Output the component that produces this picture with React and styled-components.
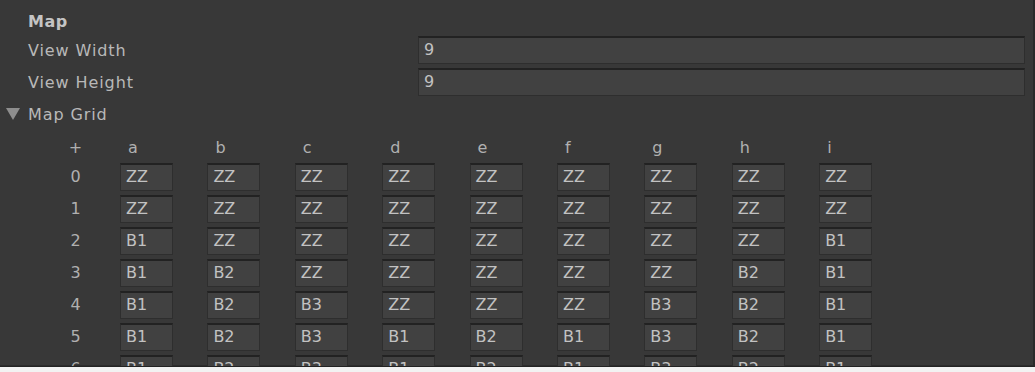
import React from "react";
import styled, { createGlobalStyle } from "styled-components";

const Global = createGlobalStyle`
  html, body { margin: 0; padding: 0; background: #f2f2f2; }
  #root { width: 1035px; }
`;

const Panel = styled.div`
  box-sizing: border-box;
  width: 1035px;
  height: 367px;
  background: #383838;
  border-right: 2px solid #2a2a2a;
  border-bottom: 1px solid #232323;
  overflow: hidden;
  font-family: "DejaVu Sans", "Liberation Sans", sans-serif;
  font-size: 16px;
  color: #b8b8b8;
  padding: 11px 8px 0 0;
  box-shadow: inset 0 -1px 0 #2c2c2c;
`;

const SectionTitle = styled.div`
  height: 22px;
  line-height: 22px;
  padding-left: 28px;
  font-weight: bold;
  letter-spacing: 0.5px;
  color: #c4c4c4;
`;

const PropertyRow = styled.div`
  display: flex;
  align-items: center;
  height: 28px;
  margin-top: ${(p) => p.$gap}px;
  padding-left: 28px;
`;

const Label = styled.div`
  width: 390px;
  flex: none;
  letter-spacing: 0.9px;
`;

const ValueField = styled.div`
  box-sizing: border-box;
  flex: 1;
  height: 28px;
  background: #414141;
  border: 1px solid #2e2e2e;
  border-top: 2px solid #222222;
  padding-left: 5px;
  line-height: 24px;
  color: #c2c2c2;
`;

const Foldout = styled.div`
  display: flex;
  align-items: center;
  height: 26px;
  margin-top: 5px;
  padding-left: 6px;
  gap: 8px;
  letter-spacing: 0.9px;
`;

const Arrow = styled.span`
  width: 0;
  height: 0;
  border-left: 7px solid transparent;
  border-right: 7px solid transparent;
  border-top: 12px solid #8e8e8e;
`;

const Grid = styled.div`
  display: grid;
  grid-template-columns: 80px repeat(9, 87.4px);
  grid-template-rows: 28px;
  grid-auto-rows: 28px;
  row-gap: 4px;
  margin-top: 4px;
  margin-left: 40px;
`;

const IndexCell = styled.div`
  text-align: center;
  padding-right: 9px;
  line-height: 28px;
  padding-top: ${(p) => (p.$header ? 3 : 0)}px;
  color: #b0b0b0;
`;

const HeaderCell = styled.div`
  padding-left: 8px;
  padding-top: 3px;
  line-height: 28px;
  color: #b0b0b0;
`;

const Cell = styled.div`
  box-sizing: border-box;
  width: 53px;
  height: 28px;
  background: #414141;
  border: 1px solid #2e2e2e;
  border-top: 2px solid #222222;
  padding-left: 5px;
  line-height: 24px;
  color: #c2c2c2;
`;

const cols = ["a", "b", "c", "d", "e", "f", "g", "h", "i"];
const data = [
  ["ZZ", "ZZ", "ZZ", "ZZ", "ZZ", "ZZ", "ZZ", "ZZ", "ZZ"],
  ["ZZ", "ZZ", "ZZ", "ZZ", "ZZ", "ZZ", "ZZ", "ZZ", "ZZ"],
  ["B1", "ZZ", "ZZ", "ZZ", "ZZ", "ZZ", "ZZ", "ZZ", "B1"],
  ["B1", "B2", "ZZ", "ZZ", "ZZ", "ZZ", "ZZ", "B2", "B1"],
  ["B1", "B2", "B3", "ZZ", "ZZ", "ZZ", "B3", "B2", "B1"],
  ["B1", "B2", "B3", "B1", "B2", "B1", "B3", "B2", "B1"],
  ["B1", "B2", "B3", "B1", "B2", "B1", "B3", "B2", "B1"],
];

export default function App() {
  return (
    <>
      <Global />
      <Panel>
        <SectionTitle>Map</SectionTitle>
        <PropertyRow $gap={3}>
          <Label>View Width</Label>
          <ValueField>9</ValueField>
        </PropertyRow>
        <PropertyRow $gap={4}>
          <Label>View Height</Label>
          <ValueField>9</ValueField>
        </PropertyRow>
        <Foldout>
          <Arrow />
          <span>Map Grid</span>
        </Foldout>
        <Grid>
          <IndexCell $header>+</IndexCell>
          {cols.map((c) => (
            <HeaderCell key={c}>{c}</HeaderCell>
          ))}
          {data.map((row, r) => (
            <React.Fragment key={r}>
              <IndexCell>{r}</IndexCell>
              {row.map((v, i) => (
                <Cell key={i}>{v}</Cell>
              ))}
            </React.Fragment>
          ))}
        </Grid>
      </Panel>
    </>
  );
}
